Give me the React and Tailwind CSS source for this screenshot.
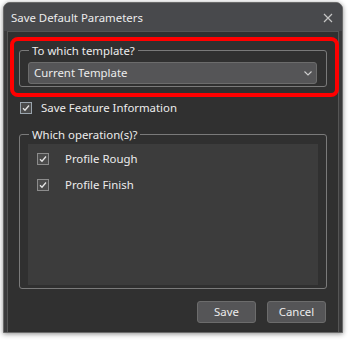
import React from 'react';

const font = { fontFamily: '"Noto Sans", "Open Sans", sans-serif' };

function Check({ className = '' }) {
  return (
    <span className={`flex items-center justify-center w-[12px] h-[12px] border border-[#8c8c8c] bg-[#4b4b4b] ${className}`}>
      <svg width="8" height="8" viewBox="0 0 8 8" fill="none">
        <path d="M1 4.2 L3 6.2 L7 1.5" stroke="#e6e6e6" strokeWidth="1.3" />
      </svg>
    </span>
  );
}

export default function App() {
  return (
    <div className="w-[350px] h-[342px] bg-white pt-[2px] pl-[3px] text-[#ececec]" style={font}>
      <div className="relative w-[340px] h-[331px] rounded-t-[7px] bg-[#3a3a3b] border border-[#6a6a6a] shadow-[0_1px_5px_rgba(0,0,0,0.45)] flex flex-col">
        {/* title bar */}
        <div className="h-[28px] flex items-center justify-between pl-[7px] pr-[9px] pt-[1px] bg-[#48494c] rounded-t-[6px]">
          <span className="text-[11.4px]">Save Default Parameters</span>
          <svg width="10" height="10" viewBox="0 0 10 10">
            <path d="M1 1 L9 9 M9 1 L1 9" stroke="#c4c4c4" strokeWidth="1.2" />
          </svg>
        </div>

        {/* body */}
        <div className="flex-1 mx-[3px] border border-b-0 border-[#555] bg-[#303030] px-[11px] pt-[10px] pb-[9px] flex flex-col">
          <fieldset className="border border-[#7a7a7a] rounded-[3px] pl-[8px] pr-[9px] pb-[2px]">
            <legend className="ml-[1px] px-[3px] text-[11.4px] leading-[17px]">To which template?</legend>
            <div className="mt-[3px] h-[22px] flex items-center justify-between pl-[5px] pr-[4px] bg-[#555557] border border-[#6c6c6c] rounded-[3px] text-[11.4px]">
              <span>Current Template</span>
              <svg width="8" height="5" viewBox="0 0 8 5" fill="none">
                <path d="M0.5 0.5 L4 4 L7.5 0.5" stroke="#cfcfcf" strokeWidth="1.1" />
              </svg>
            </div>
          </fieldset>

          <label className="mt-[13px] h-[15px] flex items-center gap-[9px] pl-[1px] text-[11.4px]">
            <Check className="border-[#9aa4ad]" />
            <span>Save Feature Information</span>
          </label>

          <fieldset className="mt-[11px] border border-[#7a7a7a] rounded-[3px] pl-[8px] pr-[8px] pb-[3px]">
            <legend className="ml-[1px] px-[3px] text-[11.4px] leading-[17px]">Which operation(s)?</legend>
            <div className="mt-[1px] h-[141px] bg-[#3c3c3c] pl-[9px] pt-[2px] flex flex-col">
              <label className="h-[26px] flex items-center gap-[16px] text-[11.4px]">
                <Check />
                <span>Profile Rough</span>
              </label>
              <label className="h-[26px] flex items-center gap-[16px] text-[11.4px]">
                <Check />
                <span>Profile Finish</span>
              </label>
            </div>
          </fieldset>

          <div className="mt-auto flex justify-end gap-[11px] pr-[1px]">
            <button className="w-[59px] h-[22px] bg-[#555557] border border-[#6c6c6c] rounded-[3px] text-[11.4px]">Save</button>
            <button className="w-[59px] h-[22px] bg-[#555557] border border-[#6c6c6c] rounded-[3px] text-[11.4px]">Cancel</button>
          </div>
        </div>

        {/* red highlight annotation */}
        <div className="absolute left-[6px] top-[34px] w-[329px] h-[60px] border-[4px] border-[#ff0000] rounded-[8px] pointer-events-none" />
      </div>
    </div>
  );
}
